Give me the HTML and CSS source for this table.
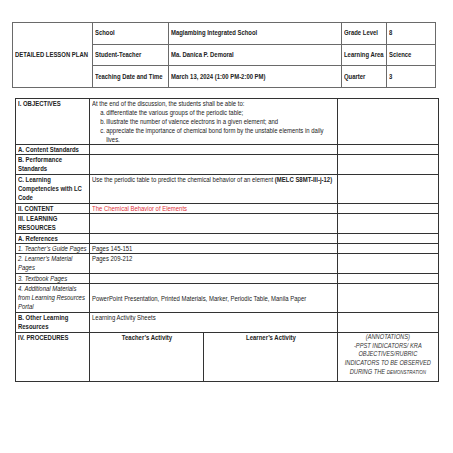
FILE: index.html
```html
<!DOCTYPE html>
<html>
<head>
<meta charset="utf-8">
<link rel="stylesheet" href="styles.css">
</head>
<body>
<div class="sheet">
  <table class="head">
    <colgroup><col class="h1"><col class="h2"><col class="h3"><col class="h4"><col class="h5"></colgroup>
    <tr>
      <td rowspan="3"><div class="t">DETAILED LESSON PLAN</div></td>
      <td><div class="t">School</div></td>
      <td><div class="t">Maglambing Integrated School</div></td>
      <td><div class="t">Grade Level</div></td>
      <td><div class="t">8</div></td>
    </tr>
    <tr>
      <td><div class="t">Student-Teacher</div></td>
      <td><div class="t">Ma. Danica P. Demoral</div></td>
      <td><div class="t">Learning Area</div></td>
      <td><div class="t">Science</div></td>
    </tr>
    <tr>
      <td><div class="t">Teaching Date and Time</div></td>
      <td><div class="t">March 13, 2024 (1:00 PM-2:00 PM)</div></td>
      <td><div class="t">Quarter</div></td>
      <td><div class="t">3</div></td>
    </tr>
  </table>

  <table class="main">
    <colgroup><col class="m1"><col class="m2"><col class="m3"><col class="m4"></colgroup>
    <tr class="r-obj">
      <td class="b"><div class="t">I. OBJECTIVES</div></td>
      <td colspan="2"><div class="t">At the end of the discussion, the students shall be able to:
        <ol class="obj">
          <li><span class="mk">a.</span><span>differentiate the various groups of the periodic table;</span></li>
          <li><span class="mk">b.</span><span>illustrate the number of valence electrons in a given element; and</span></li>
          <li><span class="mk">c.</span><span>appreciate the importance of chemical bond form by the unstable elements in daily lives.</span></li>
        </ol>
      </div></td>
      <td></td>
    </tr>
    <tr class="r1"><td class="b"><div class="t">A. Content Standards</div></td><td colspan="2"></td><td></td></tr>
    <tr class="r2"><td class="b"><div class="t">B. Performance Standards</div></td><td colspan="2"></td><td></td></tr>
    <tr class="r3"><td class="b"><div class="t">C. Learning Competencies with LC Code</div></td><td colspan="2"><div class="t">Use the periodic table to predict the chemical behavior of an element <b>(MELC S8MT-III-j-12)</b></div></td><td></td></tr>
    <tr class="r1"><td class="b"><div class="t">II. CONTENT</div></td><td colspan="2" class="red"><div class="t">The Chemical Behavior of Elements</div></td><td></td></tr>
    <tr class="r2"><td class="b"><div class="t">III. LEARNING RESOURCES</div></td><td colspan="2"></td><td></td></tr>
    <tr class="r1"><td class="b"><div class="t">A. References</div></td><td colspan="2"></td><td></td></tr>
    <tr class="r1"><td class="i"><div class="t">1. Teacher’s Guide Pages</div></td><td colspan="2"><div class="t">Pages 145-151</div></td><td></td></tr>
    <tr class="r2"><td class="i"><div class="t">2. Learner’s Material Pages</div></td><td colspan="2"><div class="t">Pages 209-212</div></td><td></td></tr>
    <tr class="r1"><td class="i"><div class="t">3. Textbook Pages</div></td><td colspan="2"></td><td></td></tr>
    <tr class="r3"><td class="i"><div class="t">4. Additional Materials from Learning Resources Portal</div></td><td colspan="2" class="mid"><div class="t">PowerPoint Presentation, Printed Materials, Marker, Periodic Table, Manila Paper</div></td><td></td></tr>
    <tr class="r2"><td class="b"><div class="t">B. Other Learning Resources</div></td><td colspan="2"><div class="t">Learning Activity Sheets</div></td><td></td></tr>
    <tr class="r-proc">
      <td class="b"><div class="t">IV. PROCEDURES</div></td>
      <td class="b c"><div class="t">Teacher’s Activity</div></td>
      <td class="b c"><div class="t">Learner’s Activity</div></td>
      <td class="ann"><div class="t end">(ANNOTATIONS)<br>-PPST INDICATORS/ KRA<br>OBJECTIVES/RUBRIC<br>INDICATORS TO BE OBSERVED<br>DURING THE <span class="sm">DEMONSTRATION</span></div></td>
    </tr>
  </table>
</div>
</body>
</html>
```
FILE: styles.css
```css
html, body {
  margin: 0;
  padding: 0;
  background: #fff;
}
body {
  font-family: "Liberation Sans", Arial, sans-serif;
  color: #222;
}
.sheet {
  padding-top: 22px;
}
table {
  border-collapse: collapse;
  table-layout: fixed;
}

/* the document is set in a condensed face: each cell's text is laid out
   wider and then narrowed horizontally to 78% */
.t {
  width: 128.2%;
  transform: scaleX(0.78);
  transform-origin: 0 0;
}
.t.end {
  margin-left: -28.2%;
  transform-origin: 100% 0;
}

.head {
  margin-left: 12px;
  width: 423px;
  font-size: 7.6px;
  font-weight: bold;
}
.head td {
  border: 1px solid #6a6a6a;
  height: 20.7px;
  padding: 0 2px;
  vertical-align: middle;
  line-height: 10px;
  white-space: nowrap;
}
.h1 { width: 80px; }
.h2 { width: 76px; }
.h3 { width: 173px; }
.h4 { width: 45px; }
.h5 { width: 49px; }

.main {
  margin-left: 15px;
  margin-top: 10px;
  width: 423px;
  font-size: 7.65px;
  line-height: 9px;
}
.main td {
  border: 1px solid #333;
  padding: 0 1.5px;
  vertical-align: top;
}
.m1 { width: 74px; }
.m2 { width: 114px; }
.m3 { width: 134px; }
.m4 { width: 101px; }

.r-obj td { height: 45.2px; }
.r1 td { height: 8.8px; }
.r2 td { height: 18.8px; }
.r3 td { height: 28.4px; }
.r-proc td { height: 47.5px; }

.b { font-weight: bold; }
.i { font-style: italic; }
.c { text-align: center; }
.main td.mid { vertical-align: middle; }
.red { color: #e0333a; }

.obj {
  list-style: none;
  margin: 0;
  padding: 0 6px 0 10.6px;
}
.obj li {
  display: flex;
}
.obj .mk {
  flex: 0 0 7.6px;
}
.ann {
  font-style: italic;
  text-align: center;
  font-size: 7.3px;
  line-height: 8.6px;
  color: #333;
}
.sm {
  font-size: 5.8px;
}
```
